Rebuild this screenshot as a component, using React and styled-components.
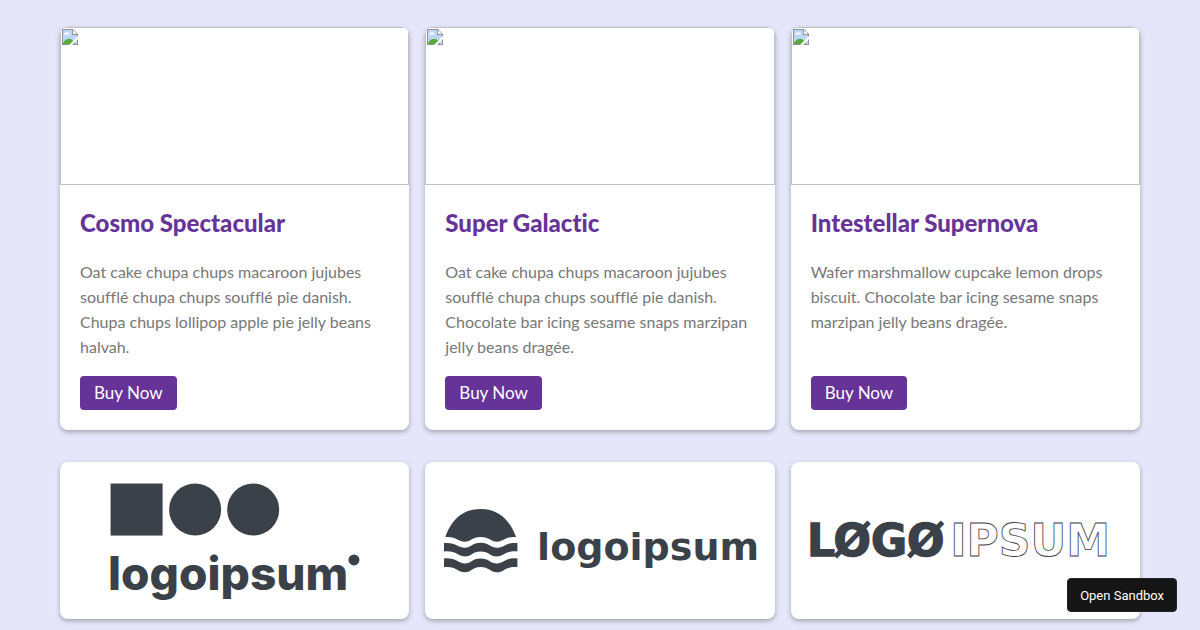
import React, { memo } from "react";

import styled, { createGlobalStyle } from "styled-components";

const GlobalStyle = createGlobalStyle`
  * {
    box-sizing: border-box;
  }

  body {
    margin: 0;
    background-color: lavender;
    font-family: Lato, "Noto Sans", sans-serif;
    font-variant-ligatures: none;
  }
`;

const Page = styled.main`
  max-width: 1200px;
  margin: 0 auto;
  padding: 27px 60px;
`;

const CardGrid = styled.div`
  display: grid;
  grid-template-columns: repeat(3, 1fr);
  gap: 32px 16px;
`;

const Card = styled.article`
  display: flex;
  flex-direction: column;
  overflow: hidden;
  background-color: #fff;
  border-radius: 8px;
  box-shadow: 0 2px 5px rgba(0, 0, 0, 0.3);
`;

const Photo = styled.div`
  aspect-ratio: 349 / 158;
  padding: 1px;
  border: 1px solid #c0c0c0;

  svg {
    display: block;
  }
`;

const CardBody = styled.div`
  flex: 1;
  display: flex;
  flex-direction: column;
  align-items: flex-start;
  padding: 20px;

  h2 {
    margin: 0 0 18px;
    font-size: 24px;
    line-height: 36px;
    font-weight: 900;
    color: rebeccapurple;
  }

  p {
    flex: 1;
    margin: 0 0 17px;
    font-size: 16px;
    line-height: 25px;
    color: #777;
  }
`;

const BuyButton = styled.button`
  height: 34px;
  padding: 0 14px 2px;
  border: 0;
  border-radius: 4px;
  background-color: rebeccapurple;
  color: #fff;
  font-family: inherit;
  font-size: 17px;
  cursor: pointer;
`;

const Logo = styled.svg`
  display: block;
  width: 100%;
  fill: #3b4148;
`;

const SandboxButton = styled.button`
  position: fixed;
  right: 23px;
  bottom: 18px;
  height: 34px;
  padding: 0 12px;
  border: 1px solid #242424;
  border-radius: 4px;
  background-color: #151515;
  color: #fff;
  font-family: Roboto, sans-serif;
  font-size: 13px;
  cursor: pointer;
`;

const products = [
  {
    name: "Cosmo Spectacular",
    text: "Oat cake chupa chups macaroon jujubes soufflé chupa chups soufflé pie danish. Chupa chups lollipop apple pie jelly beans halvah.",
  },
  {
    name: "Super Galactic",
    text: "Oat cake chupa chups macaroon jujubes soufflé chupa chups soufflé pie danish. Chocolate bar icing sesame snaps marzipan jelly beans dragée.",
  },
  {
    name: "Intestellar Supernova",
    text: "Wafer marshmallow cupcake lemon drops biscuit. Chocolate bar icing sesame snaps marzipan jelly beans dragée.",
  },
];

// torn picture shown while a product has no photo
const MissingPhoto = () => (
  <svg width="16" height="16" viewBox="0 0 16 16" aria-hidden="true">
    <path d="M0 0H11L16 5V16H0Z" fill="#8f9296" />
    <path d="M1 1H10V6H15V15H1Z" fill="#bdd5f6" />
    <path d="M11 1L15 5H11Z" fill="#fff" />
    <path d="M2 5C2 4 3 4 4 4C4 2.5 6 2.5 6.5 4C7.5 4 8 5 7.5 5.5H2Z" fill="#fff" />
    <path d="M1 15V14C4 9 9 8 12 13L13 15Z" fill="#57ab38" />
    <path d="M16 7V10L10 16H7Z" fill="#fff" />
  </svg>
);

const ShapesLogo = () => (
  <Logo viewBox="0 0 349 157" role="img" aria-label="logoipsum">
    <rect x="50.5" y="21.5" width="52" height="52" />
    <circle cx="135" cy="47.5" r="26" />
    <circle cx="193" cy="47.5" r="26" />
    <text x="48" y="128" fontFamily="Inter, sans-serif" fontWeight="800" fontSize="46">
      logoipsum
    </text>
    <circle cx="293.7" cy="97.8" r="5.5" />
  </Logo>
);

const WavesLogo = () => (
  <Logo viewBox="0 0 349 157" role="img" aria-label="logoipsum">
    <path d="M20.3 75C25 62 34 47 55.5 47S86 62 91 75C80 74 78 79.7 72 79.7S64 75 55.5 75S46 79.7 39.7 79.7S31 74 20.3 75Z" />
    <path d="M19 81C31 80 33 85.7 39.7 85.7S47 80.8 55.5 80.8S65 85.7 72 85.7S80 80 92.3 81V89.3C80 88.5 79 94.3 72 94.3S64 89.3 55.5 89.3S47 94.3 39.7 94.3S32 88.5 19 89.3Z" />
    <path d="M19 96.3C31 95.3 33 101.3 39.7 101.3S47 96.3 55.5 96.3S65 101.3 72 101.3S80 95.3 92.3 96.3V105C80 104 79 110.2 72 110.2S64 105 55.5 105S47 110.2 39.7 110.2S32 104 19 105Z" />
    <text x="112" y="98" fontFamily="DejaVu Sans, sans-serif" fontWeight="700" fontSize="38">
      logoipsum
    </text>
  </Logo>
);

const OutlineLogo = () => (
  <Logo viewBox="0 0 349 157" role="img" aria-label="logoipsum">
    <g fontFamily="DejaVu Sans, sans-serif" fontWeight="700" fontSize="44" stroke="#3b4148">
      <text x="16" y="94" strokeWidth="1.4">
        LØGØ
      </text>
      <text x="159" y="94" fill="#fff" strokeWidth="0.8">
        IPSUM
      </text>
    </g>
  </Logo>
);

const App = memo(() => {
  return (
    <>
      <GlobalStyle />
      <Page>
        <CardGrid>
          {products.map((v) => (
            <Card key={v.name}>
              <Photo>
                <MissingPhoto />
              </Photo>
              <CardBody>
                <h2>{v.name}</h2>
                <p>{v.text}</p>
                <BuyButton type="button">Buy Now</BuyButton>
              </CardBody>
            </Card>
          ))}
          <Card>
            <ShapesLogo />
          </Card>
          <Card>
            <WavesLogo />
          </Card>
          <Card>
            <OutlineLogo />
          </Card>
        </CardGrid>
      </Page>
      <SandboxButton type="button">Open Sandbox</SandboxButton>
    </>
  );
});

export default App;
